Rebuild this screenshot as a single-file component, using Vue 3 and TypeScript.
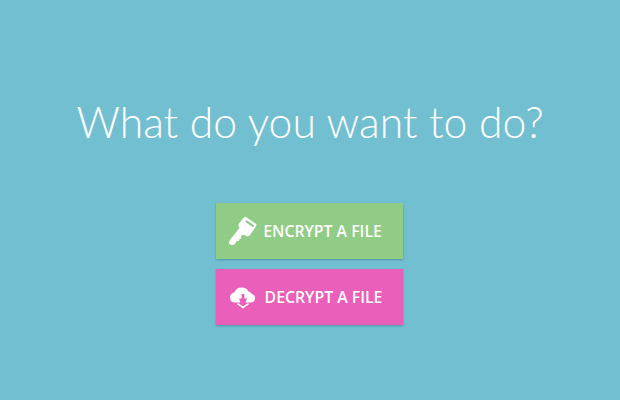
<script setup lang="ts">
const title: string = 'What do you want to do?'
</script>

<template>
  <main class="page">
    <h1 class="title">{{ title }}</h1>
    <div class="actions">
      <button class="action encrypt" type="button">
        <svg class="icon" viewBox="0 0 30 30" width="30" height="30" aria-hidden="true">
          <path fill="#fff" fill-rule="evenodd" d="M18.3 1.2 27.8 7.8a1.6 1.6 0 0 1 .4 2.2L22 19a3 3 0 0 1-3.6 1L14.8 18.4 12.6 21 13.4 22.6 11.4 23 10.8 25 8.6 25 6.6 28.4 3 29 .8 27.4 1.5 24.4 11.4 12 10.5 10a3 3 0 0 1 .4-2.4L16 1.6a1.6 1.6 0 0 1 2.3-.4ZM18.5 4 17.3 5.8 25 11.2 26.2 9.4Z"/>
        </svg>
        <span>ENCRYPT A FILE</span>
      </button>
      <button class="action decrypt" type="button">
        <svg class="icon" viewBox="0 0 30 24" width="30" height="24" aria-hidden="true">
          <path fill="#fff" fill-rule="evenodd" d="M6.5 17.5A5 5 0 0 1 6.2 7.6 8 8 0 0 1 13.6 2.5a7.4 7.4 0 0 1 6.9 4 5 5 0 0 1 3.4 2.5A4.4 4.4 0 0 1 23.5 17.5H17.6L19 13.5H16.4V9H13.6V13.5H11L12.4 17.5Z"/>
          <path fill="none" stroke="#fff" stroke-width="1.7" d="M9.5 18.6 15 22.4 20.5 18.6"/>
        </svg>
        <span>DECRYPT A FILE</span>
      </button>
    </div>
  </main>
</template>

<style scoped>
.page {
  box-sizing: border-box;
  height: 400px;
  padding-top: 93px;
  display: flex;
  flex-direction: column;
  align-items: center;
  background: #72bfd2;
  overflow: hidden;
}

.title {
  margin: 0 0 52px;
  color: #fff;
  font-family: Lato, sans-serif;
  font-size: 42.7px;
  line-height: 58px;
  font-weight: 300;
  white-space: nowrap;
}

.actions {
  display: flex;
  flex-direction: column;
  gap: 10px;
  margin-right: 1px;
}

.action {
  width: 187px;
  height: 56px;
  padding: 0 9px 0 0;
  border: 0;
  display: flex;
  align-items: center;
  justify-content: center;
  gap: 5px;
  color: #fff;
  font-family: "Open Sans", sans-serif;
  font-size: 15.8px;
  font-weight: 600;
  box-shadow: 0 1px 2px rgba(40, 90, 110, 0.45);
}

.encrypt {
  background: #90cc85;
}

.decrypt {
  gap: 7px;
  background: #e95fb9;
}
</style>
